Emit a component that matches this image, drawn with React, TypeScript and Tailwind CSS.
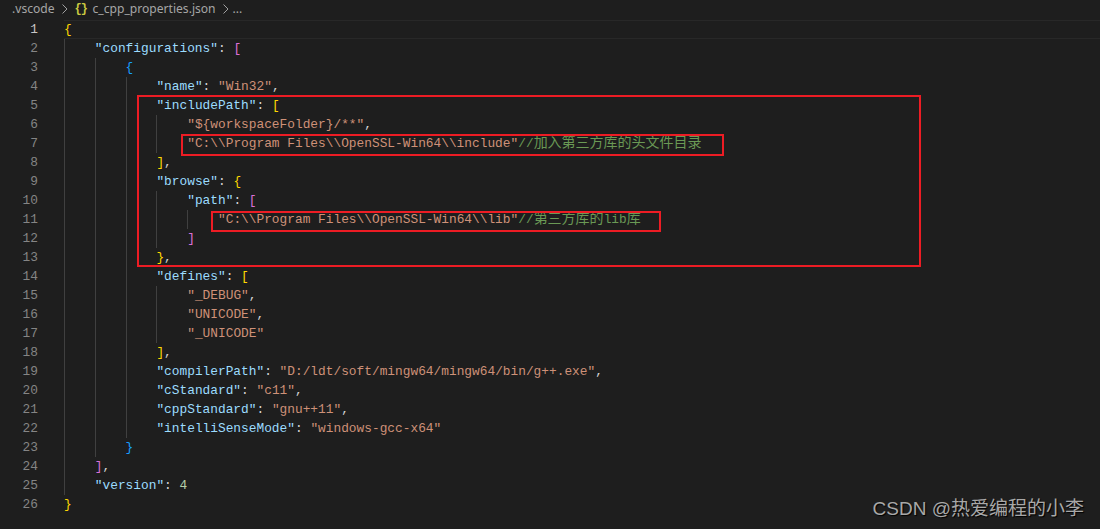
import React from "react";

type Seg = [string, string];
const K = "text-[#9cdcfe]";
const S = "text-[#ce9178]";
const P = "text-[#d4d4d4]";
const N = "text-[#b5cea8]";
const C = "text-[#6a9955]";
const G = "text-[#ffd700]";
const V = "text-[#da70d6]";
const B = "text-[#179fff]";

const lines: { g: number[]; ind: number; segs: Seg[] }[] = [
  { g: [], ind: 0, segs: [["{", G]] },
  { g: [0], ind: 1, segs: [['"configurations"', K], [": ", P], ["[", V]] },
  { g: [0, 1], ind: 2, segs: [["{", B]] },
  { g: [0, 1, 2], ind: 3, segs: [['"name"', K], [": ", P], ['"Win32"', S], [",", P]] },
  { g: [0, 1, 2], ind: 3, segs: [['"includePath"', K], [": ", P], ["[", G]] },
  { g: [0, 1, 2, 3], ind: 4, segs: [['"${workspaceFolder}/**"', S], [",", P]] },
  { g: [0, 1, 2, 3], ind: 4, segs: [['"C:\\\\Program Files\\\\OpenSSL-Win64\\\\include"', S], ["//", C], ["加入第三方库的头文件目录", "cjk"]] },
  { g: [0, 1, 2], ind: 3, segs: [["]", G], [",", P]] },
  { g: [0, 1, 2], ind: 3, segs: [['"browse"', K], [": ", P], ["{", G]] },
  { g: [0, 1, 2, 3], ind: 4, segs: [['"path"', K], [": ", P], ["[", V]] },
  { g: [0, 1, 2, 3, 4], ind: 5, segs: [['"C:\\\\Program Files\\\\OpenSSL-Win64\\\\lib"', S], ["//", C], ["第三方库的", "cjk"], ["lib", C], ["库", "cjk"]] },
  { g: [0, 1, 2, 3], ind: 4, segs: [["]", V]] },
  { g: [0, 1, 2], ind: 3, segs: [["}", G], [",", P]] },
  { g: [0, 1, 2], ind: 3, segs: [['"defines"', K], [": ", P], ["[", G]] },
  { g: [0, 1, 2, 3], ind: 4, segs: [['"_DEBUG"', S], [",", P]] },
  { g: [0, 1, 2, 3], ind: 4, segs: [['"UNICODE"', S], [",", P]] },
  { g: [0, 1, 2, 3], ind: 4, segs: [['"_UNICODE"', S]] },
  { g: [0, 1, 2], ind: 3, segs: [["]", G], [",", P]] },
  { g: [0, 1, 2], ind: 3, segs: [['"compilerPath"', K], [": ", P], ['"D:/ldt/soft/mingw64/mingw64/bin/g++.exe"', S], [",", P]] },
  { g: [0, 1, 2], ind: 3, segs: [['"cStandard"', K], [": ", P], ['"c11"', S], [",", P]] },
  { g: [0, 1, 2], ind: 3, segs: [['"cppStandard"', K], [": ", P], ['"gnu++11"', S], [",", P]] },
  { g: [0, 1, 2], ind: 3, segs: [['"intelliSenseMode"', K], [": ", P], ['"windows-gcc-x64"', S]] },
  { g: [0, 1], ind: 2, segs: [["}", B]] },
  { g: [0], ind: 1, segs: [["]", V], [",", P]] },
  { g: [0], ind: 1, segs: [['"version"', K], [": ", P], ["4", N]] },
  { g: [], ind: 0, segs: [["}", G]] },
];

const Chevron = () => (
  <svg width="8" height="12" viewBox="0 0 8 12" className="shrink-0" fill="none" stroke="#a0a0a0" strokeWidth="1">
    <path d="M1.5 1.5 6 6l-4.5 4.5" />
  </svg>
);

export default function App() {
  return (
    <div className="relative w-[1100px] h-[529px] overflow-hidden bg-[#1e1e1e]">
      <div className="h-[20px] flex items-center pl-[12px] pb-[2px] text-[12.1px] leading-[18px] text-[#a6a6a6] font-['Noto_Sans',sans-serif]">
        <span>.vscode</span>
        <span className="ml-[6px] mr-[6px] flex"><Chevron /></span>
        <span className="font-['Liberation_Mono',monospace] font-bold text-[12px] tracking-[-1px] w-[18px] text-[#cbcb41]">{"{}"}</span>
        <span>c_cpp_properties.json</span>
        <span className="ml-[6px] mr-[3px] flex"><Chevron /></span>
        <span>...</span>
      </div>
      <div className="font-['Liberation_Mono','Noto_Sans_CJK_SC',monospace] text-[12.83px]">
        {lines.map((l, i) => (
          <div key={i} className="flex h-[19px] leading-[19px] whitespace-pre">
            <div className={`w-[38px] shrink-0 text-right ${i === 0 ? "text-[#c6c6c6]" : "text-[#858585]"}`}>{i + 1}</div>
            <div className={`ml-[26px] flex-1 flex box-border ${i === 0 ? "shadow-[inset_0_1px_0_#282828,inset_0_-1px_0_#282828]" : ""}`}>
              {Array.from({ length: l.ind }).map((_, n) => (
                <span key={n} className={`w-[30.8px] shrink-0 ${l.g.includes(n) ? "border-l border-[#404040]" : ""}`} />
              ))}
              <span>
                {l.segs.map(([t, c], j) =>
                  c === "cjk" ? (
                    <span key={j} className="text-[#6a9955] text-[14px] leading-[0] font-['Noto_Sans_CJK_SC',sans-serif]">{t}</span>
                  ) : (
                    <span key={j} className={c}>{t}</span>
                  )
                )}
              </span>
            </div>
          </div>
        ))}
      </div>
      <div className="absolute left-[137px] top-[95px] w-[784px] h-[172px] border-2 border-[#ed1c24]" />
      <div className="absolute left-[181px] top-[134px] w-[543px] h-[22px] border-2 border-[#ed1c24]" />
      <div className="absolute left-[211px] top-[211px] w-[450px] h-[21px] border-2 border-[#ed1c24]" />
      <div className="absolute right-[16px] top-[497px] text-[19px] leading-[24px] text-[#a8a8a8] font-['Liberation_Sans','Noto_Sans_CJK_SC',sans-serif] [text-shadow:1px_1px_1px_#000]">
        CSDN @热爱编程的小李
      </div>
    </div>
  );
}
